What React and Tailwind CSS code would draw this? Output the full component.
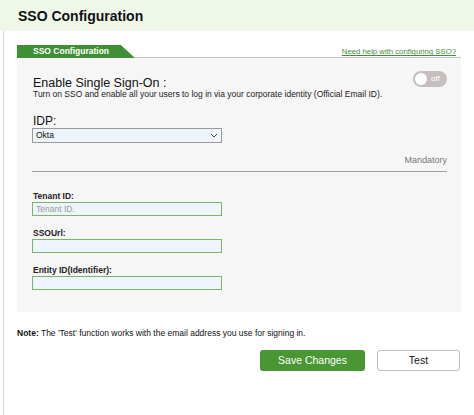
import React from 'react'

function Field({ label, placeholder = '' }) {
    return (
        <div className="flex flex-col">
            <label className="text-[8.5px] leading-[9px] font-bold text-[#222]">{label}</label>
            <input
                type="text"
                placeholder={placeholder}
                className="mt-[1px] w-[190px] h-[14px] -ml-[1px] bg-[#eef4fb] border border-[#7eb36a] px-[3px] text-[8.5px] text-[#333] placeholder:text-[#999] outline-none"
            />
        </div>
    )
}

export default function App() {
    return (
        <div className="w-[474px] h-[415px] bg-white overflow-hidden font-['Liberation_Sans',Arial,sans-serif] text-[#222]">
            <div className="h-[31px] bg-[#eef7e8] pl-[18px] flex items-center">
                <h1 className="text-[14px] font-bold text-[#111] leading-none">SSO Configuration</h1>
            </div>

            <div className="ml-[3px] h-[384px] border-l border-[#d6d6d6] pl-[13px]">
                {/* tab strip */}
                <div className="flex items-end h-[27px]">
                    <div className="w-[118px] h-[13px] bg-[#3f8f34] [clip-path:polygon(0_0,88%_0,100%_100%,0_100%)] flex items-center pl-[16px]">
                        <span className="text-[8.5px] font-bold text-white leading-none">SSO Configuration</span>
                    </div>
                    <div className="w-[326px] h-[13px] border-b border-[#c4c4c4] flex justify-end items-end pr-[5px] pb-[1px]">
                        <a href="#" className="text-[7.75px] leading-none text-[#3f8f34] underline">Need help with configuring SSO?</a>
                    </div>
                </div>

                {/* panel */}
                <div className="w-[444px] h-[254px] bg-[#f6f6f6] pl-[16px] pr-[14px] pt-[19px]">
                    <div className="flex justify-between items-start">
                        <div>
                            <div className="text-[12.5px] leading-[12px] text-[#111]">Enable Single Sign-On :</div>
                            <div className="text-[8.5px] leading-[10px] text-[#222]">
                                Turn on SSO and enable all your users to log in via your corporate identity (Official Email ID).
                            </div>
                        </div>
                        <div className="-mt-[6px] w-[34px] h-[16px] rounded-full bg-[#c7bfbf] flex items-center px-[2px] shrink-0">
                            <span className="w-[12px] h-[12px] rounded-full bg-white"></span>
                            <span className="ml-[4px] text-[8px] leading-none text-white">off</span>
                        </div>
                    </div>

                    <div className="mt-[15px] text-[12px] leading-[14px] text-[#111]">IDP:</div>
                    <div className="-ml-[1px] w-[190px] h-[15px] bg-[#eef4fb] border border-[#9a9a9a] flex items-center justify-between px-[3px]">
                        <span className="text-[8.5px] leading-none text-[#111]">Okta</span>
                        <svg width="8" height="5" viewBox="0 0 8 5" fill="none" stroke="#444" strokeWidth="1">
                            <path d="M1 1l3 3 3-3" />
                        </svg>
                    </div>

                    <div className="mt-[12px] text-right text-[9px] leading-[11px] text-[#777]">Mandatory</div>
                    <div className="mt-[5px] -ml-[1px] h-[1px] bg-[#9f9f9f]"></div>

                    <div className="mt-[20px] flex flex-col gap-[13px]">
                        <Field label="Tenant ID:" placeholder="Tenant ID." />
                        <Field label="SSOUrl:" />
                        <Field label="Entity ID(Identifier):" />
                    </div>
                </div>

                <p className="mt-[16px] text-[8.5px] leading-[10px] text-[#111]">
                    <span className="font-bold">Note:</span> The 'Test' function works with the email address you use for signing in.
                </p>

                <div className="mt-[12px] flex justify-end gap-[12px] w-[443px]">
                    <button type="button" className="w-[105px] h-[21px] rounded-[3px] bg-[#4a9632] text-white text-[10.5px] leading-none">
                        Save Changes
                    </button>
                    <button type="button" className="w-[83px] h-[21px] rounded-[3px] bg-white border border-[#bdbdbd] text-[#111] text-[10.5px] leading-none">
                        Test
                    </button>
                </div>
            </div>
        </div>
    )
}
